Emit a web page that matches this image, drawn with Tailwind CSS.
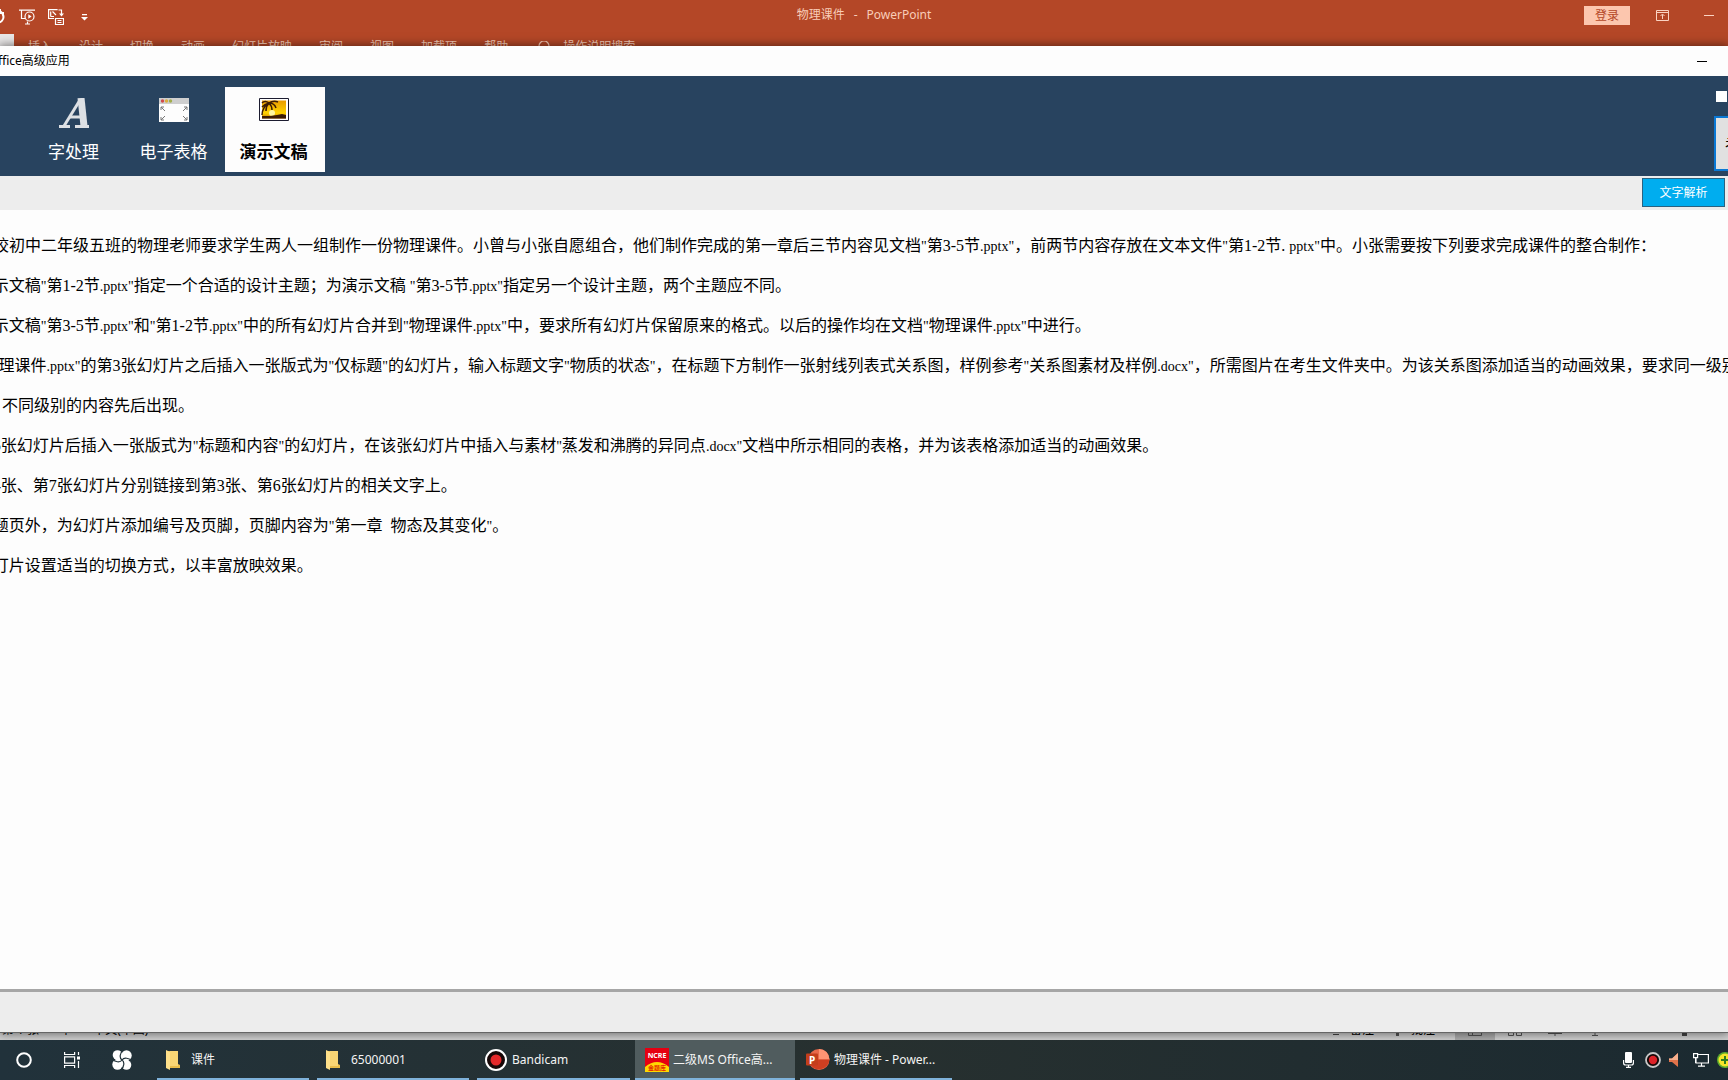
<!DOCTYPE html>
<html lang="zh-CN">
<head>
  <meta charset="UTF-8">
  <title>二级MS Office高级应用</title>
  <meta name="viewport" content="width=device-width, initial-scale=1.0"/>
  <script src="https://cdn.jsdelivr.net/npm/@tailwindcss/browser@4"></script>
</head>
<body class="h-screen flex flex-col overflow-hidden bg-[#fdfdfd] text-xs text-black font-['Noto_Sans','Noto_Sans_CJK_SC',sans-serif]">

  <!-- PowerPoint window behind -->
  <header class="h-[46px] shrink-0 overflow-hidden bg-[#b44727] text-[#f9cdb8]">
    <div class="h-[30px] grid grid-cols-[1fr_auto_1fr] items-center">
      <div class="flex items-center">
        <button class="mt-1 w-[5px] h-4 overflow-hidden flex justify-end items-center" aria-label="恢复">
          <svg class="w-4 h-4 shrink-0" viewBox="0 0 16 16" fill="none" stroke="#fff" stroke-width="2"><path d="M11.500 2.500q3 2 3 5.500a5.500 5.500 0 0 1-11 0M11 0v4h4"/></svg>
        </button>
        <button class="ml-[14px] mt-1" aria-label="从头开始放映">
          <svg class="w-4 h-4" viewBox="0 0 16 16" fill="none" stroke="#fff" stroke-width="1.200"><path d="M0 1.200h16M2.500 1v8.500H6M6 15h5M8.500 12.500V15"/><circle cx="10.500" cy="7.500" r="4.500"/><path d="M9.300 5.200v4.600l3.300-2.300z" fill="#fff" stroke="none"/></svg>
        </button>
        <button class="ml-[13px] mt-1" aria-label="发送">
          <svg class="w-4 h-4" viewBox="0 0 16 16" fill="none" stroke="#fff" stroke-width="1.200"><path d="M6 9.500H.6V.6h9M2.700 2.500v5M2.500 7.500h3.500M4.500 2.500l3.500 3.500M7.500 9.500h8v6h-8zM9.500 11.500h4M9.500 13.500h4M10.500 1h3v4"/><path d="M11 4.500h5l-2.500 3z" fill="#fff" stroke="none"/></svg>
        </button>
        <button class="ml-[17px] mt-1" aria-label="自定义快速访问工具栏">
          <svg class="w-[7px] h-[7px]" viewBox="0 0 7 7" fill="#fff"><path d="M1 0h5v1.200H1zM0 3h7L3.500 6.500z"/></svg>
        </button>
      </div>
      <h1 class="flex gap-[9px]"><span>物理课件</span><span>-</span><span>PowerPoint</span></h1>
      <div class="flex items-center justify-end pr-[14px]">
        <button class="w-[46px] h-[19px] bg-[#fcc6ae] text-[#b44727] leading-[19px]">登录</button>
        <button class="ml-[26px]" aria-label="功能区显示选项">
          <svg class="w-[13px] h-[11px]" viewBox="0 0 13 11" fill="none" stroke="#fbd3c2"><path d="M.5.5h12v10H.5zM.5 2.500h12M6.500 9V4.500M4.500 6l2-2 2 2"/></svg>
        </button>
        <button class="ml-[35px] w-[10px] h-px bg-[#fbd3c2]" aria-label="最小化"></button>
      </div>
    </div>
    <nav class="h-4 flex items-start">
      <span class="mt-1 w-[14px] h-3 bg-[#e8e6e6]"></span>
      <div class="ml-[14px] mt-2 flex gap-[27px] leading-[18px]">
        <a href="#">插入</a>
        <a href="#">设计</a>
        <a href="#">切换</a>
        <a href="#">动画</a>
        <a href="#">幻灯片放映</a>
        <a href="#">审阅</a>
        <a href="#">视图</a>
        <a href="#">加载项</a>
        <a href="#">帮助</a>
        <a href="#" class="flex gap-[13px]">
          <svg class="ml-[3px] mt-[3px] w-3 h-4" viewBox="0 0 12 16" fill="none" stroke="#f9cdb8" stroke-width="1.200"><path d="M4 11c0-2-3-3-3-6a5 5 0 0 1 10 0c0 3-3 4-3 6zM4 13.500h4"/></svg>
          操作说明搜索
        </a>
      </div>
    </nav>
  </header>

  <!-- Exam window -->
  <main class="relative flex-1 min-h-0 flex flex-col border-b border-[#666] bg-[#fdfdfd] shadow-[0_0_9px_1px_rgba(0,0,0,0.5)]">
    <div class="h-[30px] shrink-0 flex items-center justify-between overflow-hidden pr-[21px]">
      <span class="-ml-[56px] whitespace-nowrap">二级MS Office高级应用</span>
      <button class="w-[10px] h-px bg-black" aria-label="最小化"></button>
    </div>

    <div class="h-[100px] shrink-0 flex justify-between overflow-hidden bg-[#28435f] pt-[11px]">
      <nav class="ml-[25px] flex h-[85px] text-[17px] leading-6 text-white">
        <button class="w-[100px] flex flex-col items-center pt-[11px] pr-[3px]">
          <svg class="h-[30px] w-[30px]" viewBox="0 0 30 30" fill="none" stroke="#dde0e4"><path d="M5 28L21 2" stroke-width="3"/><path d="M22 0l3 28" stroke-width="7"/><path d="M10 19h12" stroke-width="3"/><path d="M0 28.500h11M16 28.500h14" stroke-width="3"/></svg>
          <span class="mt-3">字处理</span>
        </button>
        <button class="w-[100px] flex flex-col items-center pt-[11px] pr-[3px]">
          <svg class="h-[30px] w-[30px]" viewBox="0 0 30 30"><path fill="#fdfdfd" d="M0 0h30v24H0z"/><path fill="#cfcfcf" d="M0 0h30v6H0z"/><circle cx="3.500" cy="3" r="1.700" fill="#d34a4a"/><circle cx="7.500" cy="3" r="1.700" fill="#dcae3c"/><circle cx="11.500" cy="3" r="1.700" fill="#a2ae4c"/><path d="M2 12V9h3M2 9l4 4M28 12V9h-3M28 9l-4 4M2 19v3h3M2 22l4-4M28 19v3h-3M28 22l-4-4" fill="none" stroke="#777" stroke-width="1"/></svg>
          <span class="mt-3">电子表格</span>
        </button>
        <button class="w-[100px] flex flex-col items-center pt-[11px] pr-[3px] bg-[#fdfdfd] text-black font-bold">
          <svg class="h-[30px] w-[30px]" viewBox="0 0 30 30"><defs><linearGradient id="sun" x2="0" y2="1"><stop stop-color="#e99b00"/><stop offset=".7" stop-color="#ffd400"/><stop offset="1" stop-color="#c77700"/></linearGradient></defs><path fill="#fff" stroke="#1c1c30" d="M.5.5h29v22H.5z"/><path fill="url(#sun)" d="M3 2.500h24v18H3z"/><circle cx="13" cy="15" r="3" fill="#fff7a0"/><path fill="#3b1c04" d="M3 18l8 0 7-1 5-1 4 1v3.500H3z"/><path d="M3 17c0-5 3-10 7-12M10 5C7 3 5 3 3 5M10 5c-2 2-3 5-3 8M10 5c3 0 6 2 7 5M10 5c2 2 3 4 3 7M10 5c3-2 6-2 9-1M3 9c2-2 4-3 7-4" fill="none" stroke="#3b1c04" stroke-width="1.500"/></svg>
          <span class="mt-3">演示文稿</span>
        </button>
      </nav>
      <div class="w-[14px] flex flex-col overflow-hidden">
        <input type="checkbox" aria-label="置顶" class="ml-[2px] mt-[4px] size-[11px] shrink-0 appearance-none bg-white">
        <button class="mt-[14px] w-[100px] h-[55px] shrink-0 border-2 border-[#0a78d4] bg-[#e1e1e1] pl-[9px] text-left text-base">考试信息</button>
      </div>
    </div>

    <div class="h-[34px] shrink-0 flex justify-end bg-[#ededed] pt-[2px] pr-[3px]">
      <button class="w-[83px] h-[29px] border border-[#2b6280] bg-[#00adef] text-white">文字解析</button>
    </div>

    <article class="flex-1 overflow-hidden pt-4 text-base leading-10 whitespace-nowrap font-['Liberation_Serif','Noto_Sans_CJK_SC',serif]">
      <div class="-ml-[62px]">
        <p class="indent-[39px]">某校初中二年级五班的物理老师要求学生两人一组制作一份物理课件。小曾与小张自愿组合，他们制作完成的第一章后三节内容见文档<span class="text-sm">"</span>第3-5节<span class="text-sm">.pptx"</span>，前两节内容存放在文本文件<span class="text-sm">"</span>第1-2节. <span class="text-sm">pptx"</span>中。小张需要按下列要求完成课件的整合制作：</p>
        <p>(1) 为演示文稿<span class="text-sm">"</span>第1-2节<span class="text-sm">.pptx"</span>指定一个合适的设计主题；为演示文稿 <span class="text-sm">"</span>第3-5节<span class="text-sm">.pptx"</span>指定另一个设计主题，两个主题应不同。</p>
        <p>(2) 将演示文稿<span class="text-sm">"</span>第3-5节<span class="text-sm">.pptx"</span>和<span class="text-sm">"</span>第1-2节<span class="text-sm">.pptx"</span>中的所有幻灯片合并到<span class="text-sm">"</span>物理课件<span class="text-sm">.pptx"</span>中，要求所有幻灯片保留原来的格式。以后的操作均在文档<span class="text-sm">"</span>物理课件<span class="text-sm">.pptx"</span>中进行。</p>
        <p>(3) 在<span class="text-sm">"</span>物理课件<span class="text-sm">.pptx"</span>的第3张幻灯片之后插入一张版式为<span class="text-sm">"</span>仅标题<span class="text-sm">"</span>的幻灯片，输入标题文字<span class="text-sm">"</span>物质的状态<span class="text-sm">"</span>，在标题下方制作一张射线列表式关系图，样例参考<span class="text-sm">"</span>关系图素材及样例<span class="text-sm">.docx"</span>，所需图片在考生文件夹中。为该关系图添加适当的动画效果，要求同一级别的内容同<br>时出现，不同级别的内容先后出现。</p>
        <p>(4) 在第6张幻灯片后插入一张版式为<span class="text-sm">"</span>标题和内容<span class="text-sm">"</span>的幻灯片，在该张幻灯片中插入与素材<span class="text-sm">"</span>蒸发和沸腾的异同点<span class="text-sm">.docx"</span>文档中所示相同的表格，并为该表格添加适当的动画效果。</p>
        <p>(5) 将第4张、第7张幻灯片分别链接到第3张、第6张幻灯片的相关文字上。</p>
        <p>(6) 除标题页外，为幻灯片添加编号及页脚，页脚内容为<span class="text-sm">"</span>第一章&nbsp; 物态及其变化<span class="text-sm">"</span>。</p>
        <p>(7) 为幻灯片设置适当的切换方式，以丰富放映效果。</p>
      </div>
    </article>

    <div class="h-[43px] shrink-0 border-t-[3px] border-[#a6a6a6] bg-[#ededed]"></div>
  </main>

  <!-- Strip of the PowerPoint status bar -->
  <div class="h-[7px] shrink-0 overflow-hidden flex items-end justify-between bg-[#d0d0d0] pb-1 leading-3 text-black">
    <div class="flex gap-[21px] pl-[2px]">
      <span>第 1 张</span>
      <span>中</span>
      <span>中文(中国)</span>
    </div>
    <div class="flex items-end pr-[41px]">
      <span class="mb-[1px] w-[6px] h-px bg-[#444]"></span>
      <span class="ml-[11px]">备注</span>
      <span class="ml-[22px] w-[3px] h-[3px] bg-[#555]"></span>
      <span class="ml-[12px]">批注</span>
      <span class="ml-[20px] -mb-1 w-10 h-[7px] flex justify-center bg-[#ababab]"><svg class="w-[14px] h-[3px]" viewBox="0 0 14 3" fill="none" stroke="#555"><path d="M.5 0v2.500h13V0M4.500 0v2"/></svg></span>
      <svg class="ml-[13px] w-[14px] h-[3px]" viewBox="0 0 14 3" fill="none" stroke="#555"><path d="M.5 0v2.500h5V0M8.500 0v2.500h5V0"/></svg>
      <svg class="ml-[26px] w-[14px] h-[3px]" viewBox="0 0 14 3" fill="none" stroke="#555"><path d="M0 .5h14M7 0v3"/></svg>
      <svg class="ml-[30px] w-[6px] h-[3px]" viewBox="0 0 6 3" fill="none" stroke="#555"><path d="M3 0v2.500M0 2.500h6"/></svg>
      <span class="ml-[84px] w-[5px] h-[3px] bg-[#444]"></span>
    </div>
  </div>

  <!-- Taskbar -->
  <footer class="relative h-10 shrink-0 flex justify-between overflow-hidden bg-linear-to-r from-[#21323b] via-[#27302f] to-[#1b2a31] text-[#f4f4f4]">
    <div class="flex">
      <div class="flex items-center pl-4">
        <button aria-label="搜索"><svg class="size-4" viewBox="0 0 16 16" fill="none" stroke="#fff" stroke-width="2"><circle cx="8" cy="8" r="6.800"/></svg></button>
        <button class="ml-8" aria-label="任务视图"><svg class="size-4" viewBox="0 0 16 16" fill="none" stroke="#fff" stroke-width="1.200"><path d="M.6 0v2.500h10V0M.6 16v-2.500h10V16M.6 4.800h10v6.400H.6zM14.500 0v3M14.500 9v7"/><path d="M13 4.500h3v3h-3z" fill="#fff" stroke="none"/></svg></button>
        <button class="ml-8" aria-label="浏览器"><svg class="w-5 h-5" viewBox="0 0 20 20"><g fill="#fff"><circle cx="5.500" cy="5" r="4.800"/><circle cx="14.500" cy="5.500" r="5.200"/><circle cx="5.500" cy="14.500" r="5.200"/><circle cx="14.500" cy="15" r="4.800"/><circle cx="10" cy="10" r="6.500"/></g><path d="M10 10C7 8 8 3 11 0M10 10c2-3 7-2 10 1M10 10c3 2 2 7-1 10M10 10c-2 3-7 2-10-1" fill="none" stroke="#23343c" stroke-width="1.200"/></svg></button>
      </div>
      <div class="ml-[25px] flex gap-2">
        <button class="w-[152px] flex items-center border-b-2 border-[#7fb2da] pt-[2px] pl-[9px]">
          <svg class="w-[14px] h-5" viewBox="0 0 14 20"><path fill="#e9bd4b" d="M0 1h12v13l2 1v3H4z"/><path fill="#ffe08a" d="M0 0l4 2v18l-4-2z"/><path fill="#f8d574" d="M4 1h8v15H4z"/></svg>
          <span class="ml-[11px]">课件</span>
        </button>
        <button class="w-[152px] flex items-center border-b-2 border-[#7fb2da] pt-[2px] pl-[9px]">
          <svg class="w-[14px] h-5" viewBox="0 0 14 20"><path fill="#e9bd4b" d="M0 1h12v13l2 1v3H4z"/><path fill="#ffe08a" d="M0 0l4 2v18l-4-2z"/><path fill="#f8d574" d="M4 1h8v15H4z"/></svg>
          <span class="ml-[11px]">65000001</span>
        </button>
        <button class="w-[153px] flex items-center border-b-2 border-[#7fb2da] pt-[2px] pl-2">
          <svg class="w-[22px] h-[22px]" viewBox="0 0 22 22"><circle cx="11" cy="11" r="10" fill="#170808" stroke="#fff" stroke-width="2"/><circle cx="11" cy="11" r="5.500" fill="#e4282a"/></svg>
          <span class="ml-[5px]">Bandicam</span>
        </button>
      </div>
      <button class="ml-[5px] w-40 flex items-center border-b-2 border-[#7fb2da] bg-[#505c5e] pt-[2px] pl-[10px]">
        <svg class="size-6" viewBox="0 0 24 24" text-anchor="middle" font-family="Noto Sans, Noto Sans CJK SC, sans-serif" font-weight="700"><path fill="#e60012" d="M0 0h24v24H0z"/><path fill="#ffd800" d="M0 24v-5q12-10 24 0v5z"/><text x="12" y="10" font-size="7" fill="#fff">NCRE</text><text x="12" y="22" font-size="6" fill="#e62a00">金题库</text></svg>
        <span class="ml-1">二级MS Office高...</span>
      </button>
      <button class="ml-[5px] w-[152px] flex items-center border-b-2 border-[#7fb2da] pt-[2px] pl-[6px]">
        <svg class="size-6" viewBox="0 0 24 24"><circle cx="13" cy="11.500" r="10.500" fill="#e8694a"/><path fill="#ff9473" d="M13 1a10.500 10.500 0 0 1 10.500 10.500H13z"/><path fill="#cf3f21" d="M2.500 11.500h21A10.500 10.500 0 0 1 3 14z"/><rect y="5.500" width="12" height="12" rx="1" fill="#c43e1c"/><text x="6" y="15.500" font-size="10" font-weight="700" text-anchor="middle" fill="#fff" font-family="Noto Sans, sans-serif">P</text></svg>
        <span class="ml-[4px]">物理课件 - Power...</span>
      </button>
    </div>
    <div class="flex items-center">
      <svg class="w-[11px] h-4" viewBox="0 0 11 16"><rect x="2" width="7" height="11" rx="1" fill="#fff"/><path d="M.6 8v3q0 2 2 2h5.800q2 0 2-2V8M5.500 13v2.400M3 15.400h5" fill="none" stroke="#fff" stroke-width="1.200"/></svg>
      <svg class="ml-[11px] size-4" viewBox="0 0 16 16"><circle cx="8" cy="8" r="7" fill="#170808" stroke="#c8c8c8" stroke-width="1.800"/><circle cx="8" cy="8" r="4.200" fill="#dc2228"/></svg>
      <svg class="ml-2 w-[10px] h-[14px]" viewBox="0 0 10 14"><path fill="#e0734a" d="M9 0v14L3 9H0V5.500h3z"/><path fill="#f7b08e" d="M9 0v7H0V5.500h3z"/></svg>
      <svg class="ml-[14px] w-4 h-[14px]" viewBox="0 0 16 14" fill="none" stroke="#fff" stroke-width="1.200"><path d="M5 1.500h10.400v8.500H3V5M8.500 10v3M5 13.200h7M.6.6h4v4h-4zM2.600 4v6"/></svg>
      <div class="ml-2 w-[11px] overflow-hidden"><svg class="w-4 h-4" viewBox="0 0 16 16"><circle cx="8" cy="8" r="8" fill="#5fae2e"/><circle cx="8" cy="8" r="6.500" fill="#f6e62a"/><path d="M8 4v8M4 8h8" stroke="#2e7d1e" stroke-width="2"/></svg></div>
    </div>
  </footer>

</body>
</html>
